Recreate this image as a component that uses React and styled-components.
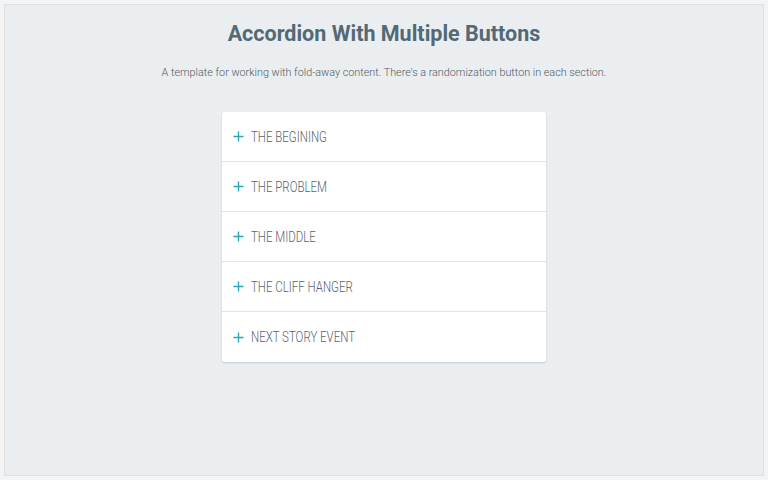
import React from 'react';
import styled, { createGlobalStyle } from 'styled-components';

const GlobalStyle = createGlobalStyle`
  html, body {
    margin: 0;
    padding: 0;
    background: #f4f4f4;
  }
  * {
    box-sizing: border-box;
  }
`;

const Frame = styled.div`
  margin: 4px;
  height: 472px;
  border: 1px solid #dddfe1;
  background: #eaeef1;
  display: flex;
  flex-direction: column;
  align-items: center;
  padding-top: 15px;
  font-family: Roboto, 'Liberation Sans', sans-serif;
`;

const Title = styled.h1`
  margin: 0;
  font-size: 21.5px;
  font-weight: 700;
  color: #536975;
  line-height: 28px;
`;

const Subtitle = styled.p`
  margin: 18px 0 0;
  font-size: 10.8px;
  font-weight: 300;
  color: #4e5a62;
  line-height: 14px;
`;

const Accordion = styled.div`
  margin-top: 32px;
  width: 324px;
  background: #fff;
  border-radius: 3px;
  box-shadow: 0 1px 2px rgba(0, 0, 0, 0.15);
  overflow: hidden;
`;

const Item = styled.button`
  display: flex;
  align-items: center;
  width: 100%;
  height: 50px;
  padding: 0 0 0 11px;
  border: 0;
  border-bottom: ${(p) => (p.$last ? '0' : '1px solid #e1e4e6')};
  background: transparent;
  cursor: pointer;
  text-align: left;
`;

const Plus = styled.svg`
  width: 11px;
  height: 11px;
  flex-shrink: 0;
  margin-right: 7px;
`;

const Label = styled.span`
  display: inline-block;
  font-family: Roboto, 'Liberation Sans', sans-serif;
  font-weight: 300;
  font-size: 15.5px;
  color: #56636c;
  text-transform: uppercase;
  transform: scaleX(0.74);
  transform-origin: left center;
  white-space: nowrap;
`;

const sections = [
  'The Begining',
  'The Problem',
  'The Middle',
  'The Cliff Hanger',
  'Next Story Event',
];

function App() {
  return (
    <>
      <GlobalStyle />
      <Frame>
        <Title>Accordion With Multiple Buttons</Title>
        <Subtitle>
          A template for working with fold-away content. There&apos;s a randomization button in each section.
        </Subtitle>
        <Accordion>
          {sections.map((s, i) => (
            <Item key={s} $last={i === sections.length - 1}>
              <Plus viewBox="0 0 11 11">
                <path d="M5.5 0.5v10M0.5 5.5h10" stroke="#2aa6b5" strokeWidth="1.4" fill="none" />
              </Plus>
              <Label>{s}</Label>
            </Item>
          ))}
        </Accordion>
      </Frame>
    </>
  );
}

export default App;
